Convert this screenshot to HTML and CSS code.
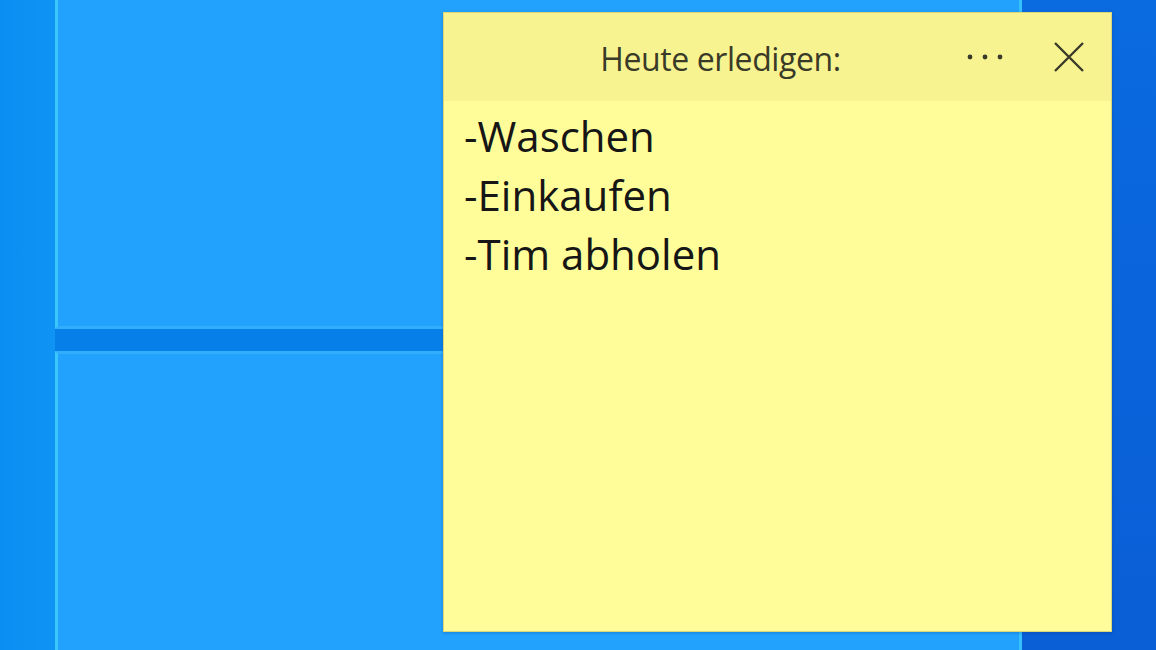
FILE: index.html
```html
<!DOCTYPE html>
<html lang="de">
<head>
<meta charset="utf-8">
<title>Kurznotizen</title>
<link rel="stylesheet" href="styles.css">
</head>
<body>
<div class="desktop">
  <div class="strip-left"></div>
  <div class="panes">
    <div class="pane pane-top"></div>
    <div class="pane-gap"></div>
    <div class="pane pane-bottom"></div>
  </div>
  <div class="strip-right"></div>

  <div class="note">
    <div class="note-header">
      <span class="note-title">Heute erledigen:</span>
      <div class="note-actions">
        <span class="btn-more" aria-label="Menü">
          <svg width="38" height="8" viewBox="0 0 38 8"><circle cx="3" cy="4" r="2.4" fill="#3a3a2a"/><circle cx="18" cy="4" r="2.4" fill="#3a3a2a"/><circle cx="33" cy="4" r="2.4" fill="#3a3a2a"/></svg>
        </span>
        <span class="btn-close" aria-label="Schließen">
          <svg width="32" height="32" viewBox="0 0 32 32"><path d="M2 2 L30 30 M30 2 L2 30" stroke="#3a3a2a" stroke-width="2.4" fill="none"/></svg>
        </span>
      </div>
    </div>
    <div class="note-body">
      <p>-Waschen</p>
      <p>-Einkaufen</p>
      <p>-Tim abholen</p>
    </div>
  </div>
</div>
</body>
</html>
```

FILE: styles.css
```css
html, body {
  margin: 0;
  padding: 0;
  width: 1156px;
  height: 650px;
  overflow: hidden;
}

.desktop {
  position: relative;
  width: 1156px;
  height: 650px;
  display: flex;
  background: #0a86ec;
}

.strip-left {
  width: 55px;
  background: linear-gradient(90deg, #0a8ef2 0%, #0f94f4 100%);
}

.panes {
  width: 967px;
  display: flex;
  flex-direction: column;
}

.pane {
  background: #22a2fc;
  border-left: 3px solid #3ac6ff;
  border-right: 3px solid #36c0fc;
  box-sizing: border-box;
}

.pane-top {
  height: 329px;
  border-bottom: 3px solid #32aefc;
}

.pane-gap {
  height: 22px;
  background: #0680e8;
}

.pane-bottom {
  flex: 1;
  border-top: 3px solid #32aefc;
}

.strip-right {
  flex: 1;
  background: linear-gradient(180deg, #0a6ae0 0%, #0a5ed6 100%);
}

.note {
  position: absolute;
  left: 443px;
  top: 12px;
  width: 669px;
  height: 620px;
  box-sizing: border-box;
  background: #fffd99;
  border: 1px solid #ddd678;
  display: flex;
  flex-direction: column;
  box-shadow: 0 1px 3px rgba(0, 40, 120, 0.25);
}

.note-header {
  height: 88px;
  background: #f8f391;
  display: flex;
  align-items: center;
  justify-content: center;
  position: relative;
}

.note-title {
  font-family: "Open Sans", "Noto Sans", sans-serif;
  font-size: 32px;
  color: #3a3a28;
  letter-spacing: -0.4px;
  margin-right: 114px;
  padding-top: 2px;
}

.note-actions {
  position: absolute;
  right: 26px;
  top: 28px;
  display: flex;
  align-items: center;
  gap: 48px;
}

.btn-more {
  display: flex;
  width: 38px;
  height: 32px;
  align-items: center;
}

.btn-close {
  display: flex;
  width: 32px;
  height: 32px;
}

.note-body {
  padding: 5px 20px;
  font-family: "Open Sans", "Noto Sans", sans-serif;
  font-size: 42px;
  color: #161616;
}

.note-body p {
  margin: 0;
  line-height: 59px;
}
```
